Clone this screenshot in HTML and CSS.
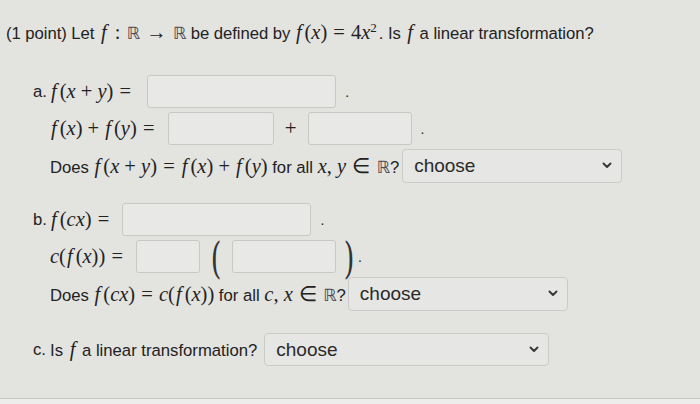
FILE: index.html
```html
<!DOCTYPE html>
<html>
<head>
<meta charset="utf-8">
<link rel="stylesheet" href="styles.css">
</head>
<body>
<div class="page">
  <div class="title">(1 point) Let <span class="m fi">f</span><span class="mo">:</span><span class="bb">ℝ</span><span class="mo">→</span><span class="bb">ℝ</span> be defined by <span class="m f">f</span><span class="mr">(</span><span class="m">x</span><span class="mr">)</span><span class="mo">=</span><span class="mr">4</span><span class="m">x</span><sup class="sup">2</sup>. Is <span class="m fi">f</span> a linear transformation?</div>

  <div class="part part-a">
    <div class="lbl">a.</div>
    <div class="rows">
      <div class="row">
        <span class="expr e1"><span class="m f">f</span><span class="mr">(</span><span class="m">x</span><span class="mb">+</span><span class="m">y</span><span class="mr">)</span><span class="mo">=</span></span>
        <span class="box w189"></span><span class="dot">.</span>
      </div>
      <div class="row">
        <span class="expr e2"><span class="m f">f</span><span class="mr">(</span><span class="m">x</span><span class="mr">)</span><span class="mb">+</span><span class="m f">f</span><span class="mr">(</span><span class="m">y</span><span class="mr">)</span><span class="mo">=</span></span>
        <span class="box w106"></span><span class="plus">+</span><span class="box w104"></span><span class="dot">.</span>
      </div>
      <div class="row">
        <span class="expr q">Does <span class="m f">f</span><span class="mr">(</span><span class="m">x</span><span class="mb">+</span><span class="m">y</span><span class="mr">)</span><span class="mo">=</span><span class="m f">f</span><span class="mr">(</span><span class="m">x</span><span class="mr">)</span><span class="mb">+</span><span class="m f">f</span><span class="mr">(</span><span class="m">y</span><span class="mr">)</span> for all <span class="m">x</span><span class="mr">, </span><span class="m">y</span><span class="mo">∈</span><span class="bb">ℝ</span>?</span>
        <span class="select w220"><span class="choose">choose</span><svg class="chev" width="10" height="7" viewBox="0 0 10 7"><path d="M1.5 1.5 L5 5 L8.5 1.5" fill="none" stroke="#3a3a3a" stroke-width="2" stroke-linecap="round" stroke-linejoin="round"/></svg></span>
      </div>
    </div>
  </div>

  <div class="part part-b">
    <div class="lbl">b.</div>
    <div class="rows">
      <div class="row">
        <span class="expr e2"><span class="m f">f</span><span class="mr">(</span><span class="m">cx</span><span class="mr">)</span><span class="mo">=</span></span>
        <span class="box w189"></span><span class="dot">.</span>
      </div>
      <div class="row">
        <span class="expr e2"><span class="m">c</span><span class="mr">(</span><span class="m f">f</span><span class="mr">(</span><span class="m">x</span><span class="mr">))</span><span class="mo">=</span></span>
        <span class="box w64"></span><span class="paren lp">(</span><span class="box w104"></span><span class="paren rp">)</span><span class="dot2">.</span>
      </div>
      <div class="row">
        <span class="expr q2">Does <span class="m f">f</span><span class="mr">(</span><span class="m">cx</span><span class="mr">)</span><span class="mo">=</span><span class="m">c</span><span class="mr">(</span><span class="m f">f</span><span class="mr">(</span><span class="m">x</span><span class="mr">))</span> for all <span class="m">c</span><span class="mr">, </span><span class="m">x</span><span class="mo">∈</span><span class="bb">ℝ</span>?</span>
        <span class="select w220"><span class="choose">choose</span><svg class="chev" width="10" height="7" viewBox="0 0 10 7"><path d="M1.5 1.5 L5 5 L8.5 1.5" fill="none" stroke="#3a3a3a" stroke-width="2" stroke-linecap="round" stroke-linejoin="round"/></svg></span>
      </div>
    </div>
  </div>

  <div class="part part-c">
    <div class="lbl">c.</div>
    <div class="rows">
      <div class="row">
        <span class="expr qc">Is <span class="m fi">f</span> a linear transformation?</span>
        <span class="select w285"><span class="choose">choose</span><svg class="chev" width="10" height="7" viewBox="0 0 10 7"><path d="M1.5 1.5 L5 5 L8.5 1.5" fill="none" stroke="#3a3a3a" stroke-width="2" stroke-linecap="round" stroke-linejoin="round"/></svg></span>
      </div>
    </div>
  </div>
  <div class="spacer"></div>
  <div class="bottom"></div>
</div>
</body>
</html>
```

FILE: styles.css
```css
html, body {
  margin: 0;
  padding: 0;
  background: #e3e3e0;
}
.page {
  width: 700px;
  height: 404px;
  display: flex;
  flex-direction: column;
  font-family: "Liberation Sans", Arial, sans-serif;
  font-size: 16.7px;
  color: #222;
  padding-top: 20px;
  box-sizing: border-box;
}
.title {
  height: 24px;
  line-height: 24px;
  padding-left: 6px;
  white-space: nowrap;
  letter-spacing: -0.05px;
}
.m {
  font-family: "Liberation Serif", "Times New Roman", serif;
  font-style: italic;
  font-size: 20.5px;
}
.m.f {
  padding-left: 1px;
  padding-right: 3px;
}
.m.fi {
  padding: 0 2px;
}
.mr {
  font-family: "Liberation Serif", "Times New Roman", serif;
  font-size: 20.5px;
}
.mo {
  font-family: "Liberation Serif", "Times New Roman", serif;
  font-size: 20.5px;
  padding: 0 0.3em;
}
.mb {
  font-family: "Liberation Serif", "Times New Roman", serif;
  font-size: 20.5px;
  padding: 0 0.25em;
}
.bb {
  font-family: "DejaVu Sans", sans-serif;
  font-size: 17px;
  color: #4a4650;
}
.sup {
  font-family: "Liberation Serif", serif;
  font-size: 13px;
  vertical-align: 7px;
  line-height: 0;
  padding-right: 2px;
}
.part {
  display: flex;
  padding-left: 33px;
}
.part-a { margin-top: 31px; }
.part-b { margin-top: 21px; }
.part-c { margin-top: 23px; }
.lbl {
  width: 17px;
  height: 33px;
  line-height: 33px;
}
.rows {
  display: flex;
  flex-direction: column;
  gap: 4px;
}
.row {
  display: flex;
  align-items: center;
  height: 33px;
  white-space: nowrap;
}
.expr { margin-right: 8px; }
.expr.e1 { margin-right: 10px; }
.expr.e2 { margin-right: 7px; }
.expr.q { margin-right: 3px; }
.expr.q2 { margin-right: 2px; }
.expr.qc { margin-right: 7px; }
.box {
  display: block;
  height: 33px;
  box-sizing: border-box;
  border: 1px solid #c8c8c5;
  border-radius: 3px;
  background: #e8e8e6;
}
.w189 { width: 189px; }
.w106 { width: 106px; }
.w104 { width: 104px; }
.w64 { width: 64px; }
.dot {
  margin-left: 9px;
  font-size: 14px;
}
.plus {
  width: 34px;
  text-align: center;
  font-family: "Liberation Serif", serif;
  font-size: 21px;
}
.paren {
  font-family: "DejaVu Serif", serif;
  font-weight: 200;
  font-size: 42px;
  line-height: 33px;
  transform: scaleX(0.65);
  display: block;
  color: #333;
  position: relative;
  top: 2px;
}
.lp { width: 32px; text-align: center; }
.rp { width: 26px; text-align: center; }
.dot2 { font-size: 14px; margin-left: -4px; }
.select {
  display: flex;
  align-items: center;
  justify-content: space-between;
  height: 34px;
  box-sizing: border-box;
  border: 1px solid #cbcbc8;
  border-radius: 4px;
  background: #e6e6e4;
  padding: 0 9px 0 11px;
}
.w220 { width: 220px; }
.w285 { width: 285px; height: 33px; }
.choose {
  font-size: 19px;
  color: #2a2a2a;
}
.spacer { flex: 1; }
.bottom {
  height: 5px;
  border-top: 1px solid #c6c6c2;
  background: #ededeb;
}
```
